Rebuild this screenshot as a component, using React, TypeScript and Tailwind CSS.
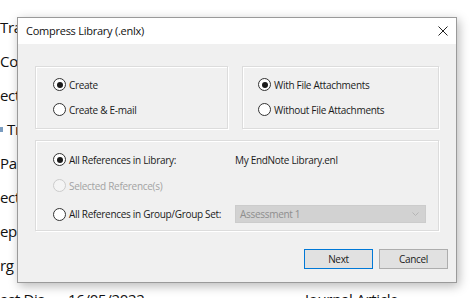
import React from 'react';

const font = { fontFamily: '"Segoe UI", "Open Sans", "Noto Sans", sans-serif' };

interface RadioProps {
  label: string;
  checked?: boolean;
  disabled?: boolean;
}

function Radio({ label, checked, disabled }: RadioProps) {
  return (
    <div className="flex h-[13px] items-center gap-[3px]">
      <span
        className={`flex h-[13px] w-[13px] shrink-0 items-center justify-center rounded-full border ${
          disabled ? 'border-[#cccccc] bg-[#f4f4f4]' : 'border-[#333333] bg-white'
        }`}
      >
        {checked && <span className="h-[6px] w-[6px] rounded-full bg-[#1b1b1b]" />}
      </span>
      <span className={`whitespace-nowrap leading-none ${disabled ? 'text-[#a3a3a3]' : 'text-[#1b1b1b]'}`}>{label}</span>
    </div>
  );
}

function GroupBox({ className, children }: { className: string; children: React.ReactNode }) {
  return (
    <div className={`border border-[#dcdcdc] shadow-[inset_1px_1px_0_#ffffff,1px_1px_0_#ffffff] ${className}`}>
      {children}
    </div>
  );
}

// only the slivers of the library list that peek out left of the dialog
const rows = [
  { text: 'Tra' },
  { text: 'Cor' },
  { text: 'ect' },
  { text: 'Tr', icon: true },
  { text: 'Par' },
  { text: 'ect' },
  { text: 'ep' },
  { text: 'rg' },
];

export default function App() {
  return (
    <div className="relative h-[298px] w-[474px] overflow-hidden bg-white" style={font}>
      {/* library list behind the dialog */}
      <div className="flex flex-col pt-[10px] text-[15px] text-[#111111]">
        {rows.map((r, i) => (
          <div key={i} className="flex h-[34px] items-center whitespace-nowrap tracking-[-0.3px]">
            {r.icon && <span className="mr-[4px] h-[5px] w-[3px] bg-[#7a9cc0]" />}
            <span>{r.text}</span>
          </div>
        ))}
        <div className="flex h-[34px] items-center whitespace-nowrap tracking-[-0.3px]">
          <span className="w-[68px]">ast Dis</span>
          <span className="w-[237px]">16/05/2022</span>
          <span>Journal Article</span>
        </div>
      </div>

      {/* dialog */}
      <div className="absolute left-[17px] top-[17px] flex h-[266px] w-[440px] flex-col border border-[#9a9a9a] bg-[#f0f0f0] text-[10px] tracking-[-0.3px] shadow-[2px_3px_10px_rgba(0,0,0,0.28)]">
        <div className="flex h-[26px] shrink-0 items-center justify-between bg-white pl-[8px] pr-[8px]">
          <span className="text-[11px] tracking-[-0.25px] text-[#111111]">Compress Library (.enlx)</span>
          <svg width="10" height="10" viewBox="0 0 10 10">
            <path d="M0.5 0.5 L9.5 9.5 M9.5 0.5 L0.5 9.5" stroke="#222222" strokeWidth="1" />
          </svg>
        </div>

        <div className="flex flex-col px-[17px] pt-[22px]">
          <div className="flex gap-[14px]">
            <GroupBox className="flex h-[63px] w-[193px] flex-col gap-[12px] pl-[17px] pt-[11px]">
              <Radio label="Create" checked />
              <Radio label="Create & E-mail" />
            </GroupBox>
            <GroupBox className="flex h-[63px] flex-1 flex-col gap-[12px] pl-[15px] pt-[11px]">
              <Radio label="With File Attachments" checked />
              <Radio label="Without File Attachments" />
            </GroupBox>
          </div>

          <GroupBox className="mt-[11px] flex h-[91px] flex-col gap-[13px] pl-[17px] pt-[12px]">
            <div className="grid grid-cols-[182px_1fr] items-center">
              <Radio label="All References in Library:" checked />
              <span className="leading-none text-[#1b1b1b]">My EndNote Library.enl</span>
            </div>
            <Radio label="Selected Reference(s)" disabled />
            <div className="grid grid-cols-[182px_1fr] items-center">
              <Radio label="All References in Group/Group Set:" />
              <div className="flex h-[18px] w-[191px] items-center justify-between border border-[#cccccc] bg-[#d2d2d2] pl-[4px] pr-[6px] text-[#8e8e8e]">
                <span>Assessment 1</span>
                <svg width="7" height="4" viewBox="0 0 7 4">
                  <path d="M0.5 0.5 L3.5 3.5 L6.5 0.5" stroke="#b5b5b5" fill="none" strokeWidth="1" />
                </svg>
              </div>
            </div>
          </GroupBox>
        </div>

        <div className="mt-[18px] flex justify-end gap-[6px] pr-[8px]">
          <button className="flex h-[20px] w-[69px] items-center justify-center border border-[#0078d7] bg-[#e1e1e1] text-[#1b1b1b]">
            Next
          </button>
          <button className="flex h-[20px] w-[69px] items-center justify-center border border-[#adadad] bg-[#e1e1e1] text-[#1b1b1b]">
            Cancel
          </button>
        </div>
      </div>
    </div>
  );
}
